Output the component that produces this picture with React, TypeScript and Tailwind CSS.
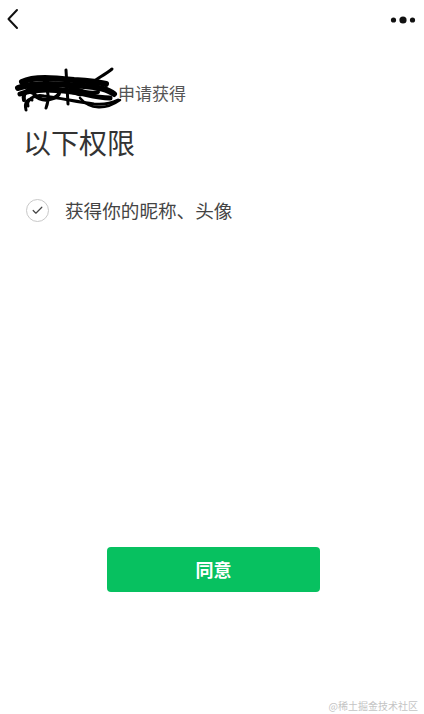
import { Check } from 'lucide-react';

const font = { fontFamily: '"Noto Sans CJK SC", "Noto Sans", sans-serif' };

function Scribble() {
  // hand-drawn redaction over the app name
  return (
    <svg width="110" height="48" viewBox="0 0 110 48" className="absolute left-[-10px] top-[-14px]" fill="none" stroke="#000" strokeLinecap="round" strokeLinejoin="round">
      <path d="M8 16 C20 10 40 12 60 14 C75 15 85 16 92 18" strokeWidth="6" />
      <path d="M4 22 C20 16 45 18 70 20 C85 21 95 24 100 28" strokeWidth="6" />
      <path d="M6 28 C22 22 40 24 58 26 C70 27 80 32 96 32" strokeWidth="5" />
      <path d="M10 34 C8 26 16 20 30 20 C44 20 50 28 40 32 C30 36 18 32 20 24" strokeWidth="4" />
      <path d="M14 40 C12 34 20 28 30 30 C46 32 64 36 80 38 C90 39 96 38 104 34" strokeWidth="3" />
      <path d="M12 44 C10 36 14 32 18 34" strokeWidth="3" />
      <path d="M52 4 L54 38" strokeWidth="3" />
      <path d="M66 32 C76 44 92 44 106 34" strokeWidth="2.5" />
      <path d="M76 18 C84 12 92 8 98 3" strokeWidth="3" />
      <path d="M30 14 C34 26 36 32 32 42" strokeWidth="3" />
      <path d="M18 26 C30 22 50 22 66 28" strokeWidth="5" />
      <path d="M40 18 C50 16 70 30 84 26" strokeWidth="4" />
    </svg>
  );
}

export default function App() {
  return (
    <div className="w-[424px] h-[714px] bg-white relative flex flex-col overflow-hidden" style={font}>
      {/* Top bar */}
      <div className="h-[38px] flex items-center justify-between pl-[6px] pr-[6px]">
        <svg width="14" height="22" viewBox="0 0 14 22" fill="none" stroke="#111" strokeWidth="2" strokeLinecap="round" strokeLinejoin="round" className="mt-[-1px]">
          <path d="M11 2 L2.5 11 L11 20" />
        </svg>
        <svg width="28" height="10" viewBox="0 0 28 10" fill="#111" className="mt-[1px]">
          <circle cx="3.5" cy="5" r="2.6" />
          <circle cx="13" cy="5" r="3.6" />
          <circle cx="22.5" cy="5" r="2.6" />
        </svg>
      </div>

      {/* Header */}
      <div className="px-6 pt-[42px]">
        <div className="flex items-center h-[24px]">
          <div className="relative w-[94px] h-[24px]">
            <Scribble />
          </div>
          <span className="text-[17px] text-[#555] leading-none">申请获得</span>
        </div>
        <div className="mt-[20px] ml-[-1px] text-[28px] leading-[36px] text-[#333]">以下权限</div>
      </div>

      {/* Permission item */}
      <div className="px-[26px] mt-[38px] flex items-center">
        <div className="w-[23px] h-[23px] rounded-full border-[1.5px] border-[#c8c8c8] flex items-center justify-center">
          <Check size={13} strokeWidth={2.2} color="#444" />
        </div>
        <span className="ml-[16px] text-[18.6px] leading-[24px] text-[#444]">获得你的昵称、头像</span>
      </div>

      <div className="flex-1" />

      {/* Agree button */}
      <div className="flex justify-center pb-[122px]">
        <button className="w-[213px] h-[45px] ml-[3px] rounded-[4px] bg-[#07c160] text-white text-[18px] font-bold">
          同意
        </button>
      </div>

      <div className="absolute right-[6px] bottom-[2px] text-[10px] leading-[12px] text-[#c4c4c4]">@稀土掘金技术社区</div>
    </div>
  );
}
